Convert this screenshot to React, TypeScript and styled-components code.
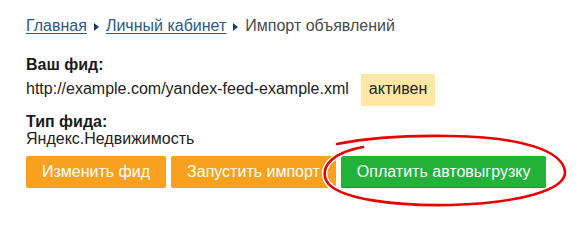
import React from 'react';
import styled, { createGlobalStyle } from 'styled-components';

const GlobalStyle = createGlobalStyle`
    html, body {
        margin: 0;
        padding: 0;
        background: #fff;
    }
    body {
        font-family: "Liberation Sans", Arial, sans-serif;
        color: #222;
    }
`;

const Page = styled.div`
    position: relative;
    width: 586px;
    height: 215px;
    padding: 16px 26px 0;
    box-sizing: border-box;
    overflow: hidden;
`;

const Breadcrumbs = styled.nav`
    display: flex;
    align-items: center;
    gap: 7px;
    font-size: 16px;
    line-height: 20px;
    color: #4a4a4a;
`;

const Crumb = styled.a`
    color: #2b5a80;
    text-decoration: underline;
    text-underline-offset: 2px;
`;

const Arrow = styled.span`
    display: inline-block;
    width: 0;
    height: 0;
    border-top: 4px solid transparent;
    border-bottom: 4px solid transparent;
    border-left: 5px solid #1e3f5c;
    margin-top: 1px;
`;

const Label = styled.div<{ $gap?: number }>`
    font-size: 16px;
    font-weight: bold;
    line-height: ${p => (p.$gap ? 17 : 18)}px;
    margin-top: ${p => p.$gap ?? 20}px;
    color: #1a1a1a;
`;

const FeedRow = styled.div`
    display: flex;
    align-items: baseline;
    font-size: 16px;
    line-height: 18px;
`;

const Url = styled.span`
    color: #222;
`;

const Badge = styled.span`
    margin-left: 12px;
    padding: 6px 8px 8px;
    background: #ffe8a3;
    color: #222;
`;

const Value = styled.div`
    font-size: 16px;
    line-height: 17px;
    color: #222;
`;

const Actions = styled.div`
    display: flex;
    gap: 5px;
    margin-top: 9px;
`;

const Button = styled.button<{ $variant?: 'orange' | 'green' }>`
    height: 32px;
    padding: 0 16px;
    border: none;
    border-radius: 2px;
    font-family: "Liberation Sans", Arial, sans-serif;
    font-size: 16px;
    color: #fff;
    cursor: pointer;
    background: ${p => (p.$variant === 'green' ? '#22b23a' : '#f9a11f')};
    box-shadow: ${p => (p.$variant === 'green' ? 'inset 0 -1px 0 #1c9630' : 'none')};
`;

const Marker = styled.svg`
    position: absolute;
    left: 0;
    top: 0;
    pointer-events: none;
`;

const circlePath =
    'M 363 147 C 335 152, 320 165, 326 180 C 335 200, 400 206, 450 205 ' +
    'C 520 203, 566 190, 565 172 C 563 150, 520 137, 450 136 C 400 135, 362 139, 337 144';

export default function App()
{
    return (
        <Page>
            <GlobalStyle />
            <Breadcrumbs>
                <Crumb href="#">Главная</Crumb>
                <Arrow />
                <Crumb href="#">Личный кабинет</Crumb>
                <Arrow />
                <span>Импорт объявлений</span>
            </Breadcrumbs>

            <Label>Ваш фид:</Label>
            <FeedRow>
                <Url>http://example.com/yandex-feed-example.xml</Url>
                <Badge>активен</Badge>
            </FeedRow>

            <Label $gap={7}>Тип фида:</Label>
            <Value>Яндекс.Недвижимость</Value>

            <Actions>
                <Button>Изменить фид</Button>
                <Button>Запустить импорт</Button>
                <Button $variant="green">Оплатить автовыгрузку</Button>
            </Actions>

            <Marker width="586" height="215" viewBox="0 0 586 215">
                <path d={circlePath} fill="none" stroke="#fff" strokeWidth="5.5" strokeLinecap="round" />
                <path d={circlePath} fill="none" stroke="#e80000" strokeWidth="2.6" strokeLinecap="round" />
            </Marker>
        </Page>
    );
}
